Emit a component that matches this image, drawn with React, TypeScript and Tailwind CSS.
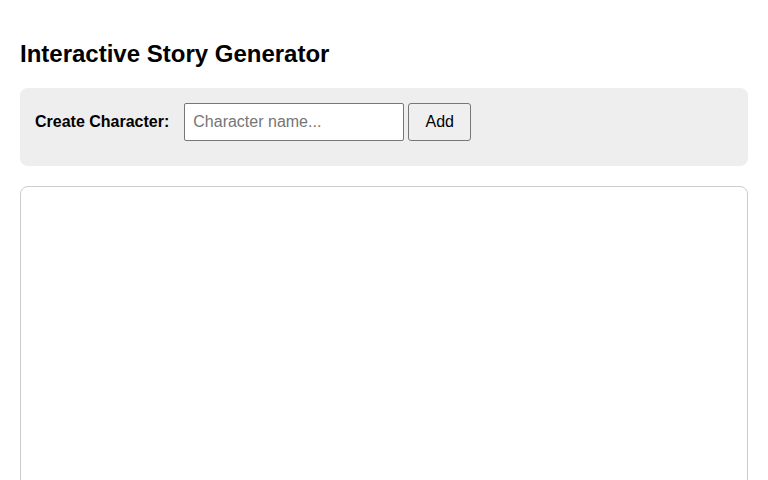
export default function App() {
  return (
    <div className="bg-white px-5 pt-10 pb-5" style={{ fontFamily: '"Liberation Sans", Arial, sans-serif' }}>
      <h1 className="text-[24px] font-bold leading-[28px] text-black mb-5">Interactive Story Generator</h1>
      <div className="bg-[#eeeeee] rounded-lg px-[15px] pt-[15px] pb-[25px]">
        <div className="flex items-center">
          <span className="text-[16px] font-bold text-black mr-[15px]">Create Character:</span>
          <input
            className="w-[220px] h-[38px] px-2 text-[16px] border border-[#767676] rounded-[2px] bg-white text-black placeholder:text-[#757575] outline-none"
            placeholder="Character name..."
          />
          <button className="ml-1 w-[63px] h-[38px] text-[16px] text-black bg-[#efefef] border border-[#767676] rounded-[3px]">
            Add
          </button>
        </div>
      </div>
      <div className="mt-5 h-[400px] border border-[#cccccc] rounded-lg bg-white"></div>
    </div>
  );
}
